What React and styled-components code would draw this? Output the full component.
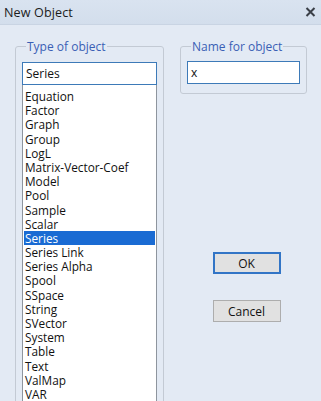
import React from "react";
import styled, { createGlobalStyle } from "styled-components";

const Global = createGlobalStyle`
  html, body { margin: 0; padding: 0; overflow: hidden; background: #e3eaf4; }
  body { font-family: "Open Sans", "Noto Sans", sans-serif; }
`;

const Window = styled.div`
  width: 321px;
  height: 401px;
  display: flex;
  flex-direction: column;
  background: #e3eaf4;
  overflow: hidden;
`;

const TitleBar = styled.div`
  height: 25px;
  flex: none;
  display: flex;
  align-items: center;
  justify-content: space-between;
  padding: 0 5px 0 4px;
  background: linear-gradient(#d9e3f0, #d3deec);
  border-bottom: 1px solid #c9d4e3;
  box-sizing: border-box;
`;

const Title = styled.span`
  font-size: 12.6px;
  color: #1c1c1c;
  letter-spacing: 0.1px;
`;

const Body = styled.div`
  flex: 1;
  display: flex;
  align-items: flex-start;
  gap: 16px;
  padding: 13px 0 0 15px;
`;

const Group = styled.fieldset`
  margin: 0;
  width: ${(p) => p.$w}px;
  height: ${(p) => p.$h}px;
  box-sizing: border-box;
  border: 1px solid #c3cad4;
  border-radius: 3px;
  padding: ${(p) => p.$pt}px 6px 0 6px;
  display: flex;
  flex-direction: column;
`;

const Legend = styled.legend`
  font-size: 12px;
  color: #3a5fb5;
  padding: 0 1px;
  margin-left: 4px;
`;

const TextBox = styled.div`
  height: 23px;
  box-sizing: border-box;
  border: 1px solid #3d7ab8;
  background: #fff;
  font-size: 12px;
  color: #111;
  display: flex;
  align-items: center;
  padding-left: 3px;
`;

const List = styled.div`
  height: 330px;
  box-sizing: border-box;
  border: 1px solid #8e959e;
  border-top: none;
  background: #fff;
  padding: 4px 1px 2px;
  display: flex;
  flex-direction: column;
`;

const Item = styled.div`
  height: 14.2px;
  line-height: 14.2px;
  font-size: 11.8px;
  padding-left: 1px;
  color: ${(p) => (p.$sel ? "#fff" : "#111")};
  background: ${(p) => (p.$sel ? "#1a6bd3" : "transparent")};
  white-space: nowrap;
`;

const RightCol = styled.div`
  display: flex;
  flex-direction: column;
  align-items: center;
  width: 127px;
`;

const Buttons = styled.div`
  display: flex;
  flex-direction: column;
  gap: 26px;
  margin-top: 158px;
  margin-left: 6px;
`;

const Button = styled.div`
  width: 68px;
  height: 22px;
  box-sizing: border-box;
  background: #e1e1e1;
  border: ${(p) => (p.$def ? "2px solid #3275c6" : "1px solid #adadad")};
  font-size: 12px;
  color: #111;
  display: flex;
  align-items: center;
  justify-content: center;
`;

const items = [
  "Equation", "Factor", "Graph", "Group", "LogL", "Matrix-Vector-Coef",
  "Model", "Pool", "Sample", "Scalar", "Series", "Series Link",
  "Series Alpha", "Spool", "SSpace", "String", "SVector", "System",
  "Table", "Text", "ValMap", "VAR",
];

export default function App() {
  return (
    <>
      <Global />
      <Window>
        <TitleBar>
          <Title>New Object</Title>
          <svg width="11" height="10" viewBox="0 0 11 10">
            <path d="M1.5 1 L9.5 9 M9.5 1 L1.5 9" stroke="#3a3f47" strokeWidth="2" />
          </svg>
        </TitleBar>
        <Body>
          <Group $w={149} $h={420} $pt={7}>
            <Legend>Type of object</Legend>
            <TextBox>Series</TextBox>
            <List>
              {items.map((t) => (
                <Item key={t} $sel={t === "Series"}>{t}</Item>
              ))}
            </List>
          </Group>
          <RightCol>
            <Group $w={127} $h={56} $pt={6}>
              <Legend>Name for object</Legend>
              <TextBox>x</TextBox>
            </Group>
            <Buttons>
              <Button $def>OK</Button>
              <Button>Cancel</Button>
            </Buttons>
          </RightCol>
        </Body>
      </Window>
    </>
  );
}
